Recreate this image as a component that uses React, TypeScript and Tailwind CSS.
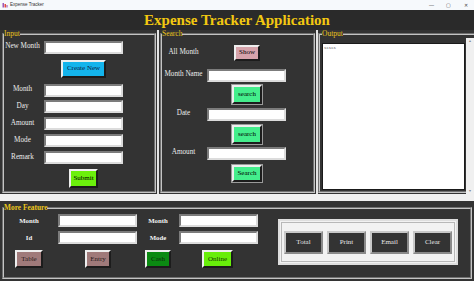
import React from 'react';

// Tk-style sunken entry and raised button
const field =
  'h-[13px] w-[79px] bg-white border-[2px] border-t-[#7c7c7c] border-l-[#7c7c7c] border-r-[#dcdcdc] border-b-[#dcdcdc]';
const raised =
  'flex items-center justify-center leading-none text-[7px] border-[2px] border-t-[#eeeeee] border-l-[#eeeeee] border-r-[#1c1c1c] border-b-[#1c1c1c]';
const label = 'text-[7.2px] leading-none text-[#ececec] text-center';
const legend = 'text-[7.5px] leading-none text-[#eac51b] px-0';

function Row({ text, labelW, gap }: { text: string; labelW: string; gap: string }) {
  return (
    <div className={`flex items-center ${gap}`}>
      <span className={`${label} ${labelW}`}>{text}</span>
      <div className={field} />
    </div>
  );
}

function InputPanel() {
  return (
    <div className="w-[157px] h-full bg-[#333333] pl-[2px] pr-[1px] pb-[1px]">
      <fieldset className="h-full border-[2px] [border-style:groove] border-[#c4c4c4]">
        <legend className={legend}>Input</legend>
        <div className="flex flex-col pt-[3px]">
          <Row text="New Month" labelW="w-[37px]" gap="gap-[3px]" />
          <div className="ml-[40px] w-[79px] flex justify-center mt-[6px]">
            <button className={`${raised} w-[45px] h-[18px] bg-[#14b4ec] text-[#0c1c44]`}>Create New</button>
          </div>
          <div className="flex flex-col gap-[3.8px] mt-[6px]">
            <Row text="Month" labelW="w-[37px]" gap="gap-[3px]" />
            <Row text="Day" labelW="w-[37px]" gap="gap-[3px]" />
            <Row text="Amount" labelW="w-[37px]" gap="gap-[3px]" />
            <Row text="Mode" labelW="w-[37px]" gap="gap-[3px]" />
            <Row text="Remark" labelW="w-[37px]" gap="gap-[3px]" />
          </div>
          <div className="ml-[40px] w-[79px] flex justify-center mt-[5px]">
            <button className={`${raised} w-[29px] h-[19px] bg-[#6cf00c] text-black`}>Submit</button>
          </div>
        </div>
      </fieldset>
    </div>
  );
}

function SearchBtn({ text, h }: { text: string; h: string }) {
  return (
    <div className="ml-[45px] w-[80px] flex justify-center">
      <button className={`${raised} w-[30px] ${h} bg-[#44ee8c] text-black outline outline-[1px] outline-[#9a9a9a]`}>
        {text}
      </button>
    </div>
  );
}

function SearchPanel() {
  return (
    <div className="w-[157px] h-full bg-[#333333] pl-[1px] pr-[1px] pb-[1px]">
      <fieldset className="h-full border-[2px] [border-style:groove] border-[#c4c4c4]">
        <legend className={legend}>Search</legend>
        <div className="flex flex-col pt-[7px]">
          <div className="flex items-center gap-[2px]">
            <span className={`${label} w-[43px]`}>All Month</span>
            <div className="w-[80px] flex justify-center">
              <button className={`${raised} w-[26px] h-[16px] bg-[#d6a3ab] text-black`}>Show</button>
            </div>
          </div>
          <div className="mt-[8px]">
            <Row text="Month Name" labelW="w-[43px]" gap="gap-[2px]" />
          </div>
          <div className="mt-[3px]">
            <SearchBtn text="search" h="h-[19px]" />
          </div>
          <div className="mt-[4px]">
            <Row text="Date" labelW="w-[43px]" gap="gap-[2px]" />
          </div>
          <div className="mt-[4px]">
            <SearchBtn text="search" h="h-[19px]" />
          </div>
          <div className="mt-[3px]">
            <Row text="Amount" labelW="w-[43px]" gap="gap-[2px]" />
          </div>
          <div className="mt-[5px]">
            <SearchBtn text="Search" h="h-[17px]" />
          </div>
        </div>
      </fieldset>
    </div>
  );
}

function OutputPanel() {
  return (
    <div className="flex-1 h-full bg-[#333333] pb-[1px]">
      <fieldset className="h-full border-[2px] border-r-0 [border-style:groove] border-[#c4c4c4]">
        <legend className={`${legend} ml-[2px]`}>Output</legend>
        <div className="flex h-[154px]">
          <div className="flex-1 ml-[2px] mt-[5px] mb-[2px] mr-[1px] border border-[#1a1a1a] bg-white">
            <p className="text-[4px] leading-none text-[#555] font-['Liberation_Mono',monospace] pl-[1px] pt-[2px]">scscs</p>
          </div>
          <div className="w-[8px] mb-[-2px] bg-[#f0f0f0] flex flex-col justify-between items-center py-[1px]">
            <span className="text-[4px] leading-none text-[#888]">▴</span>
            <span className="text-[4px] leading-none text-[#888]">▾</span>
          </div>
        </div>
      </fieldset>
    </div>
  );
}

function FeatureRow({ a, b }: { a: string; b: string }) {
  const bl = 'text-[6.8px] leading-none font-bold text-[#f2f2f2] text-center';
  return (
    <div className="flex items-center">
      <span className={`${bl} w-[50px]`}>{a}</span>
      <div className={`${field} ml-[4px]`} />
      <span className={`${bl} w-[42px]`}>{b}</span>
      <div className={field} />
    </div>
  );
}

function MoreFeature() {
  const dark =
    'flex items-center justify-center leading-none text-[7px] text-[#e6e6e6] w-[39px] h-[23px] bg-[#333333] border-[2px] border-t-[#c8c8c8] border-l-[#c8c8c8] border-r-[#8a8a8a] border-b-[#8a8a8a]';
  return (
    <div className="h-[80px] bg-[#333333] px-[2px] pt-[3px] pb-[2px]">
      <fieldset className="h-full border-[2px] [border-style:groove] border-[#c4c4c4]">
        <legend className="text-[7.4px] leading-none font-bold text-[#eac51b] px-0">More Feature</legend>
        <div className="flex pt-[3px]">
          <div className="flex flex-col">
            <div className="flex flex-col gap-[4px]">
              <FeatureRow a="Month" b="Month" />
              <FeatureRow a="Id" b="Mode" />
            </div>
            <div className="flex mt-[6px]">
              <button className={`${raised} ml-[11px] w-[28px] h-[18px] bg-[#a07a7a] text-[#2a1a1a]`}>Table</button>
              <button className={`${raised} ml-[42px] w-[26px] h-[18px] bg-[#a07a7a] text-[#2a1a1a]`}>Entry</button>
              <button className={`${raised} ml-[34px] w-[26px] h-[18px] bg-[#0b8a12] text-[#0c2a0c]`}>Cash</button>
              <button className={`${raised} ml-[31px] w-[31px] h-[18px] bg-[#68ee0a] text-[#123a00]`}>Online</button>
            </div>
          </div>
          <div className="ml-[20px] mt-[5px] h-[46px] bg-[#f2f2f2] border-[2px] border-[#dedede] p-[1px]">
            <div className="h-full border border-[#b8b8b8] flex items-center gap-[4px] px-[2px]">
              <button className={dark}>Total</button>
              <button className={dark}>Print</button>
              <button className={dark}>Email</button>
              <button className={dark}>Clear</button>
            </div>
          </div>
        </div>
      </fieldset>
    </div>
  );
}

export default function App() {
  return (
    <div className="w-[474px] h-[281px] overflow-hidden bg-[#f0f0f0] font-['Liberation_Serif',serif] flex flex-col">
      {/* window title bar */}
      <div className="h-[10px] bg-[#f6f9fc] flex items-center font-['Liberation_Sans',sans-serif]">
        <svg className="ml-[2px] w-[6px] h-[6px]" viewBox="0 0 12 12">
          <rect x="1" y="2" width="3" height="9" fill="#9b59b6" />
          <rect x="5" y="4" width="3" height="7" fill="#e74c3c" />
          <rect x="9" y="6" width="2" height="5" fill="#8e44ad" />
        </svg>
        <span className="ml-[2px] text-[4.5px] leading-none text-[#333]">Expense Tracker</span>
        <div className="ml-auto flex items-center text-[5px] leading-none text-[#444]">
          <span className="w-[17px] text-center">—</span>
          <span className="w-[17px] text-center">▢</span>
          <span className="w-[17px] text-center">✕</span>
        </div>
      </div>

      <div className="h-[20px] bg-[#2a2a2a] flex items-center justify-center">
        <h1 className="text-[15px] leading-none font-bold text-[#f2c811]">Expense Tracker Application</h1>
      </div>

      <div className="h-[164px] flex gap-[2px] bg-[#e4e4e4]">
        <InputPanel />
        <SearchPanel />
        <OutputPanel />
      </div>

      <div className="h-[7px]" />

      <MoreFeature />
    </div>
  );
}
